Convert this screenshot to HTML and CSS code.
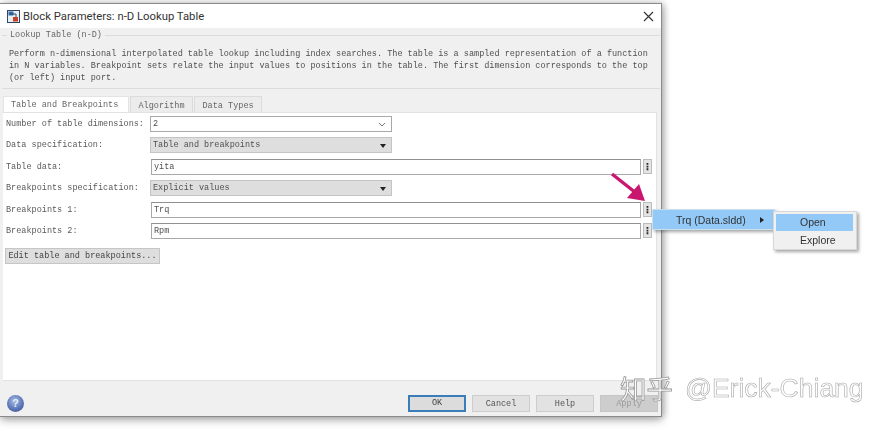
FILE: index.html
```html
<!DOCTYPE html>
<html lang="en">
<head>
<meta charset="utf-8">
<title>Block Parameters: n-D Lookup Table</title>
<link rel="stylesheet" href="styles.css">
</head>
<body>
<main class="stage">
  <section class="window">
    <header class="titlebar">
      <svg class="app-icon" width="13" height="13" viewBox="0 0 13 13">
        <rect x="0.5" y="0.5" width="12" height="12" fill="#e8eef6" stroke="#33475f"/>
        <rect x="1.5" y="1.5" width="5" height="4" fill="#2f6fb0"/>
        <path d="M3 4 L9 4 L9 8" fill="none" stroke="#33475f"/>
        <rect x="6" y="7" width="5" height="4.5" fill="#c8402a"/>
      </svg>
      <span class="title">Block Parameters: n-D Lookup Table</span>
      <svg class="close" width="11" height="11" viewBox="0 0 11 11"><path d="M1 1 L10 10 M10 1 L1 10" stroke="#333" stroke-width="1.2"/></svg>
    </header>
    <div class="body">
      <fieldset class="group">
        <legend>Lookup Table (n-D)</legend>
        <p>Perform n-dimensional interpolated table lookup including index searches. The table is a sampled representation of a function<br>in N variables. Breakpoint sets relate the input values to positions in the table. The first dimension corresponds to the top<br>(or left) input port.</p>
      </fieldset>
      <nav class="tabs">
        <span class="tab active">Table and Breakpoints</span>
        <span class="tab">Algorithm</span>
        <span class="tab">Data Types</span>
      </nav>
      <div class="panel">
        <div class="form">
          <label>Number of table dimensions:</label>
          <div class="combo short"><span>2</span>
            <svg width="8" height="5" viewBox="0 0 8 5"><path d="M1 1 L4 4 L7 1" fill="none" stroke="#777"/></svg>
          </div>
          <label>Data specification:</label>
          <div class="combo short gray"><span>Table and breakpoints</span><i class="caret"></i></div>
          <label>Table data:</label>
          <div class="field"><span class="input">yita</span><span class="more">⋮</span></div>
          <label>Breakpoints specification:</label>
          <div class="combo short gray"><span>Explicit values</span><i class="caret"></i></div>
          <label>Breakpoints 1:</label>
          <div class="field"><span class="input">Trq</span><span class="more">⋮</span></div>
          <label>Breakpoints 2:</label>
          <div class="field"><span class="input">Rpm</span><span class="more">⋮</span></div>
        </div>
        <button class="edit" type="button">Edit table and breakpoints...</button>
      </div>
      <footer class="footer">
        <span class="help-icon">?</span>
        <div class="buttons">
          <button class="btn ok" type="button">OK</button>
          <button class="btn" type="button">Cancel</button>
          <button class="btn" type="button">Help</button>
          <button class="btn off" type="button">Apply</button>
        </div>
      </footer>
    </div>
  </section>

  <svg class="arrow" width="40" height="34" viewBox="0 0 40 34">
    <path d="M3 3 L27 22" stroke="#c9176f" stroke-width="3.4" fill="none"/>
    <path d="M36 30 L18 27 L30 13 Z" fill="#c9176f"/>
  </svg>
  <div class="menu first"><span>Trq (Data.sldd)</span><i class="sub"></i></div>
  <div class="menu second">
    <div class="item hot">Open</div>
    <div class="item">Explore</div>
  </div>
  <div class="mark"><span class="zh">知乎</span><span>@Erick-Chiang</span></div>
</main>
</body>
</html>
```
FILE: styles.css
```css
* { box-sizing: border-box; }
html, body { margin: 0; height: 100%; background: #fff; overflow: hidden; }
.stage {
  position: relative;
  width: 886px;
  height: 429px;
  padding-top: 3px;
  filter: blur(0.4px);
  font: 8.53px/11px "Liberation Mono", monospace;
  color: #505050;
}
.window {
  width: 662px;
  height: 414px;
  display: flex;
  flex-direction: column;
  border: 1px solid #8a8a8a;
  border-left: 0;
  box-shadow: 0 3px 9px rgba(0,0,0,.3), 2px 0 7px rgba(0,0,0,.2);
  background: #f0f0f0;
}
.titlebar {
  height: 24px;
  flex: none;
  display: flex;
  align-items: center;
  padding: 0 7px;
  background: #fff;
}
.app-icon { margin-right: 3px; }
.title {
  flex: 1;
  font: 11.3px Roboto, "Liberation Sans", sans-serif;
  color: #333;
}
.body { flex: 1; display: flex; flex-direction: column; min-height: 0; }
.group {
  margin: 2px 1px 0 2px;
  padding: 8px 7px 0 7px;
  height: 59px;
  flex: none;
  border: 1px solid #dcdcdc;
  border-left: 0;
  border-right: 0;
}
.group legend { padding: 0 3px; margin-left: -2px; color: #666; line-height: 10px; }
.group p { margin: 0; line-height: 12.2px; color: #505050; white-space: nowrap; }
.tabs { display: flex; height: 24px; padding: 8px 0 0 3px; flex: none; margin-top: -1px; }
.tab {
  padding: 4px 7.5px 0;
  margin-left: 1px;
  height: 16px;
  background: #ececec;
  border: 1px solid #dcdcdc;
  border-bottom: 0;
  color: #666;
}
.tab.active {
  width: 126px;
  margin-left: 0;
  padding: 3px 7px 0;
  background: #fff;
  border-color: #e4e4e4;
  height: 17px;
}
.panel {
  flex: 1;
  margin: 0 4px 0 3px;
  padding: 3px 0 0 3px;
  background: #fff;
  border: 1px solid #e2e2e2;
  border-left: 0;
}
.form {
  display: grid;
  grid-template-columns: 144px 502px;
  grid-auto-rows: 16px;
  row-gap: 5.4px;
  align-items: center;
}
.form label { color: #5a5a5a; white-space: nowrap; padding-top: 1px; }
.combo {
  height: 16px;
  width: 242px;
  display: flex;
  align-items: center;
  justify-content: space-between;
  padding: 1px 5px 0 2px;
  border: 1px solid #a9a9a9;
  background: #fff;
}
.combo.gray { background: #dedede; border-color: #c4c4c4; }
.caret { width: 0; height: 0; border: 3.5px solid transparent; border-top: 4px solid #222; border-bottom: 0; }
.field { display: flex; align-items: center; padding-left: 1px; gap: 2px; }
.input {
  width: 490px;
  height: 16px;
  padding: 2px 2px;
  background: #fff;
  border: 1px solid #a8a8a8;
  border-top-color: #909090;
}
.more {
  width: 9px;
  height: 15px;
  display: flex;
  align-items: center;
  justify-content: center;
  background: #e4e4e4;
  border: 1px solid #bcbcbc;
  font: bold 10px "DejaVu Sans", sans-serif;
  color: #222;
}
.edit {
  display: block;
  margin: 9px 0 0 -1px;
  width: 155px;
  height: 16px;
  padding: 1px 0 0;
  font: inherit;
  color: #444;
  background: #dedede;
  border: 1px solid #c6c6c6;
}
.footer {
  flex: none;
  height: 35px;
  display: flex;
  align-items: center;
  justify-content: space-between;
  padding: 9px 3px 0 7px;
}
.help-icon {
  width: 17px;
  height: 17px;
  border-radius: 50%;
  display: flex;
  align-items: center;
  justify-content: center;
  background: radial-gradient(circle at 45% 35%, #a9bfe4 0%, #5c77b8 55%, #2f4483 100%);
  color: #e8eefa;
  font: bold 11px "Liberation Sans", sans-serif;
}
.buttons { display: flex; gap: 6px; }
.btn {
  width: 58px;
  height: 17px;
  padding: 2px 0 0;
  font: inherit;
  color: #555;
  background: #e2e2e2;
  border: 1px solid #cdcdcd;
}
.btn.ok { border: 2px solid #3b7db8; padding-top: 0; background: #dcdcdc; color: #444; }
.btn.off { background: #cdcdcd; border-color: #c6c6c6; color: #9a9a9a; }
.arrow { position: absolute; left: 609px; top: 171px; }
.menu {
  position: absolute;
  font: 10.5px "Liberation Sans", "Noto Sans", sans-serif;
  color: #333;
  box-shadow: 2px 2px 3px rgba(0,0,0,.35);
}
.menu.first {
  left: 652px;
  top: 209px;
  width: 123px;
  height: 21px;
  display: flex;
  align-items: center;
  padding-left: 23px;
  background: #92c9f7;
  border: 1px solid #c8dff2;
}
.sub { margin-left: 14px; width: 0; height: 0; border: 3px solid transparent; border-left: 4px solid #222; border-right: 0; }
.menu.second {
  left: 773px;
  top: 211px;
  width: 84px;
  height: 39px;
  padding: 2px 3px 0 2px;
  background: #f0f0f0;
  border: 1px solid #d8d8d8;
}
.item { height: 18px; padding-left: 24px; line-height: 17px; }
.item.hot { height: 17px; background: #92c9f7; margin-bottom: 1px; }
.mark {
  position: absolute;
  left: 620px;
  top: 373px;
  display: flex;
  align-items: center;
  gap: 12px;
  font: 26.5px/30px "Liberation Sans", sans-serif;
  color: #fff;
  -webkit-text-stroke: 0.6px #a8a8a8;
  white-space: nowrap;
}
.zh { font: 26.5px/30px "Noto Sans CJK SC", sans-serif; -webkit-text-stroke: 0.8px #999; }
```
